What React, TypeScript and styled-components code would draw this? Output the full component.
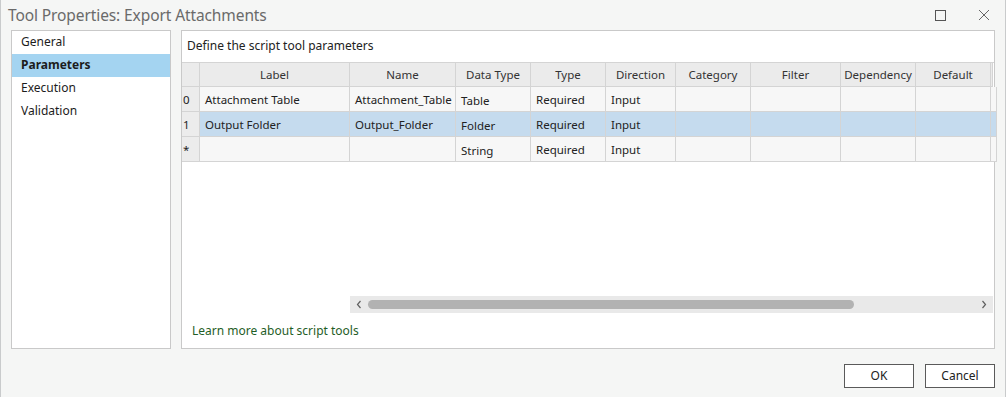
import React from 'react'
import styled, { createGlobalStyle } from 'styled-components'

const GlobalStyle = createGlobalStyle`
  html, body {
    margin: 0;
    padding: 0;
    background: #f5f6f5;
  }
  body {
    font-family: 'Noto Sans', 'Open Sans', sans-serif;
    color: #222;
  }
`

const columns = [
  { label: '', width: 18 },
  { label: 'Label', width: 150 },
  { label: 'Name', width: 106 },
  { label: 'Data Type', width: 75 },
  { label: 'Type', width: 75 },
  { label: 'Direction', width: 70 },
  { label: 'Category', width: 75 },
  { label: 'Filter', width: 90 },
  { label: 'Dependency', width: 75 },
  { label: 'Default', width: 75 },
  { label: '', width: 2 },
]

const rows = [
  { index: '0', cells: ['Attachment Table', 'Attachment_Table', 'Table', 'Required', 'Input'], selected: false },
  { index: '1', cells: ['Output Folder', 'Output_Folder', 'Folder', 'Required', 'Input'], selected: true },
  { index: '*', cells: ['', '', 'String', 'Required', 'Input'], selected: false },
]

const navItems = ['General', 'Parameters', 'Execution', 'Validation']

const Window = styled.div`
  width: 1006px;
  height: 397px;
  box-sizing: border-box;
  border-left: 1px solid #c9cbcc;
  border-right: 1px solid #c9cbcc;
  display: flex;
  flex-direction: column;
  overflow: hidden;
`

const TitleBar = styled.div`
  height: 30px;
  display: flex;
  align-items: center;
  padding-left: 7px;
`

const Title = styled.div`
  flex: 1;
  font-size: 15.5px;
  color: #6a6a6a;
  letter-spacing: -0.1px;
`

const WindowButton = styled.div`
  width: 43px;
  height: 30px;
  display: flex;
  align-items: center;
  justify-content: center;
`

const Body = styled.div`
  display: flex;
  gap: 10px;
  padding: 0 10px;
  height: 319px;
`

const NavPanel = styled.div`
  width: 160px;
  box-sizing: border-box;
  border: 1px solid #c9c9c9;
  background: #fff;
  display: flex;
  flex-direction: column;
`

const NavItem = styled.div<{ active: boolean }>`
  height: 23px;
  line-height: 22px;
  padding-left: 9px;
  font-size: 12px;
  font-weight: ${({ active }) => (active ? 700 : 400)};
  background: ${({ active }) => (active ? '#a4d4f1' : 'transparent')};
  color: #1c1c1c;
`

const MainPanel = styled.div`
  width: 814px;
  box-sizing: border-box;
  border: 1px solid #c9c9c9;
  background: #fff;
  display: flex;
  flex-direction: column;
`

const Caption = styled.div`
  height: 31px;
  line-height: 30px;
  padding-left: 5px;
  font-size: 12px;
  color: #222;
`

const Grid = styled.div`
  display: grid;
  grid-template-columns: ${columns.map((c) => `${c.width}px`).join(' ')};
  border-top: 1px solid #d4d4d4;
`

const HeaderCell = styled.div`
  height: 24px;
  box-sizing: border-box;
  background: #ebebeb;
  border-right: 1px solid #d4d4d4;
  border-bottom: 1px solid #d4d4d4;
  font-size: 11.5px;
  line-height: 23px;
  text-align: center;
  color: #333;
  white-space: nowrap;
  overflow: hidden;
`

const Cell = styled.div<{ selected: boolean; isIndex?: boolean; drop?: boolean }>`
  height: 25px;
  box-sizing: border-box;
  background: ${({ selected, isIndex }) => (isIndex ? '#ececec' : selected ? '#c5dbee' : '#f7f7f7')};
  border-right: 1px solid #d4d4d4;
  border-bottom: 1px solid #d4d4d4;
  font-size: 11.5px;
  line-height: ${({ drop }) => (drop ? '27px' : '25px')};
  padding-left: ${({ isIndex }) => (isIndex ? '1px' : '5px')};
  color: #222;
  white-space: nowrap;
  overflow: hidden;
`

const GridSpacer = styled.div`
  flex: 1;
`

const ScrollRow = styled.div`
  height: 17px;
  margin-left: 168px;
  margin-right: 1px;
  background: #e9e9e9;
  display: flex;
  align-items: center;
  padding: 0 6px;
  gap: 6px;
`

const Track = styled.div`
  flex: 1;
  display: flex;
`

const Thumb = styled.div`
  height: 9px;
  width: 486px;
  border-radius: 5px;
  background: #b2b2b2;
`

const LinkRow = styled.div`
  height: 35px;
  line-height: 35px;
  padding-left: 10px;
  font-size: 12px;
  color: #1f5e27;
`

const Footer = styled.div`
  flex: 1;
  display: flex;
  justify-content: flex-end;
  align-items: flex-start;
  gap: 11px;
  padding: 15px 10px 0 0;
`

const Button = styled.div`
  width: 70px;
  height: 24px;
  box-sizing: border-box;
  border: 1px solid #5a5a5a;
  background: #fff;
  font-size: 12px;
  line-height: 22px;
  text-align: center;
  color: #222;
`

const Chevron: React.FC<{ dir: 'left' | 'right' }> = ({ dir }) => (
  <svg width="6" height="9" viewBox="0 0 6 9">
    <path
      d={dir === 'left' ? 'M4.5 1 L1.5 4.5 L4.5 8' : 'M1.5 1 L4.5 4.5 L1.5 8'}
      fill="none"
      stroke="#606060"
      strokeWidth="1.2"
    />
  </svg>
)

const App: React.FC = () => (
  <>
    <GlobalStyle />
    <Window>
      <TitleBar>
        <Title>Tool Properties: Export Attachments</Title>
        <WindowButton>
          <svg width="11" height="11" viewBox="0 0 11 11">
            <rect x="0.5" y="0.5" width="10" height="10" fill="none" stroke="#555" strokeWidth="1" />
          </svg>
        </WindowButton>
        <WindowButton>
          <svg width="12" height="12" viewBox="0 0 12 12">
            <path d="M1 1 L11 11 M11 1 L1 11" stroke="#666" strokeWidth="1" />
          </svg>
        </WindowButton>
      </TitleBar>
      <Body>
        <NavPanel>
          {navItems.map((item) => (
            <NavItem key={item} active={item === 'Parameters'}>
              {item}
            </NavItem>
          ))}
        </NavPanel>
        <MainPanel>
          <Caption>Define the script tool parameters</Caption>
          <Grid>
            {columns.map((c, i) => (
              <HeaderCell key={i}>{c.label}</HeaderCell>
            ))}
            {rows.map((r) => (
              <React.Fragment key={r.index}>
                <Cell selected={r.selected} isIndex>
                  {r.index}
                </Cell>
                {columns.slice(1).map((_, i) => (
                  <Cell key={i} selected={r.selected} drop={i === 2}>
                    {r.cells[i] || ''}
                  </Cell>
                ))}
              </React.Fragment>
            ))}
          </Grid>
          <GridSpacer />
          <ScrollRow>
            <Chevron dir="left" />
            <Track>
              <Thumb />
            </Track>
            <Chevron dir="right" />
          </ScrollRow>
          <LinkRow>Learn more about script tools</LinkRow>
        </MainPanel>
      </Body>
      <Footer>
        <Button>OK</Button>
        <Button>Cancel</Button>
      </Footer>
    </Window>
  </>
)

export default App
